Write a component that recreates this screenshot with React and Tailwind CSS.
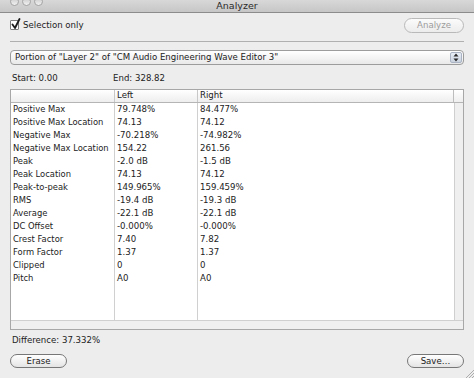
const rows = [
  ['Positive Max', '79.748%', '84.477%'],
  ['Positive Max Location', '74.13', '74.12'],
  ['Negative Max', '-70.218%', '-74.982%'],
  ['Negative Max Location', '154.22', '261.56'],
  ['Peak', '-2.0 dB', '-1.5 dB'],
  ['Peak Location', '74.13', '74.12'],
  ['Peak-to-peak', '149.965%', '159.459%'],
  ['RMS', '-19.4 dB', '-19.3 dB'],
  ['Average', '-22.1 dB', '-22.1 dB'],
  ['DC Offset', '-0.000%', '-0.000%'],
  ['Crest Factor', '7.40', '7.82'],
  ['Form Factor', '1.37', '1.37'],
  ['Clipped', '0', '0'],
  ['Pitch', 'A0', 'A0'],
];

const Light = () => (
  <div className="w-[9px] h-[9px] rounded-full border border-[#a4a4a4] bg-gradient-to-b from-[#c9c9c9] to-[#f2f2f2]" />
);

const Column = ({ index, className }) => (
  <div className={`flex flex-col ${className}`}>
    {rows.map((r) => (
      <div key={r[0]} className="h-[13px] leading-[13px] whitespace-nowrap">
        {r[index]}
      </div>
    ))}
  </div>
);

export default function App() {
  return (
    <div
      className="w-[474px] h-[378px] bg-[#ededed] flex flex-col overflow-hidden relative text-[8.6px] text-[#222]"
      style={{ fontFamily: '"DejaVu Sans", sans-serif' }}
    >
      {/* title bar */}
      <div className="h-[13px] relative flex items-start bg-gradient-to-b from-[#d8d8d8] to-[#c6c6c6] border-b border-[#8c8c8c]">
        <div className="flex gap-[3px] pl-[10px] -mt-[3px]">
          <Light />
          <Light />
          <Light />
        </div>
        <div className="absolute inset-x-0 top-0 text-center text-[9.5px] leading-[12px] text-[#2a2a2a]">Analyzer</div>
      </div>

      <div className="flex flex-col px-[10px]">
        {/* selection row */}
        <div className="mt-[5px] h-[15px] flex items-center justify-between">
          <div className="flex items-center gap-[4px]">
            <div className="relative w-[9px] h-[10px] border border-[#7d7d7d] bg-white rounded-[1px]">
              <svg className="absolute -top-[3px] left-0" width="10" height="12" viewBox="0 0 10 12">
                <path d="M1.5 6.5 L4 10 L8.5 1" fill="none" stroke="#1a1a1a" strokeWidth="1.8" strokeLinecap="round" strokeLinejoin="round" />
              </svg>
            </div>
            <span>Selection only</span>
          </div>
          <div className="w-[60px] h-[15px] rounded-full border border-[#b9b9b9] bg-gradient-to-b from-[#fbfbfb] to-[#ececec] flex items-center justify-center text-[#9c9c9c]">
            Analyze
          </div>
        </div>

        {/* separator */}
        <div className="mt-[8px] h-[1px] bg-[#b0b0b0]" />

        {/* dropdown */}
        <div className="mt-[8px] h-[15px] rounded-[4px] border border-[#9c9c9c] bg-gradient-to-b from-white to-[#e9e9e9] flex items-center justify-between pl-[4px] pr-[1px]">
          <span>Portion of "Layer 2" of "CM Audio Engineering Wave Editor 3"</span>
          <div className="w-[12px] h-[11px] rounded-[2px] border border-[#a9b3c3] bg-gradient-to-b from-[#e9eef6] to-[#c9d2de] flex items-center justify-center">
            <svg width="6" height="9" viewBox="0 0 6 9">
              <path d="M3 0.5 L5.5 3.5 H0.5 Z M3 8.5 L5.5 5.5 H0.5 Z" fill="#2b2b2b" />
            </svg>
          </div>
        </div>

        {/* start / end */}
        <div className="mt-[7px] h-[12px] leading-[12px] flex pl-[2px]">
          <span className="w-[101px]">Start: 0.00</span>
          <span>End: 328.82</span>
        </div>

        {/* table */}
        <div className="mt-[5px] h-[241px] border border-[#a7a7a7] flex flex-col bg-[#f0f0f0]">
          <div className="h-[13px] flex border-b border-[#b5b5b5] bg-gradient-to-b from-white to-[#eeeeee] leading-[11px]">
            <div className="w-[104px] border-r border-[#c8c8c8]" />
            <div className="w-[83px] border-r border-[#c8c8c8] pl-[2px]">Left</div>
            <div className="flex-1 pl-[2px] border-r border-[#bdbdbd]">Right</div>
            <div className="w-[9px]" />
          </div>
          <div className="flex-1 flex">
            <div className="flex-1 flex bg-white">
              <Column index={0} className="w-[104px] border-r border-[#d0d0d0] pl-[2px] text-[8.4px]" />
              <Column index={1} className="w-[83px] border-r border-[#d0d0d0] pl-[2px]" />
              <Column index={2} className="flex-1 pl-[2px]" />
            </div>
            <div className="w-[9px] border-l border-[#cfcfcf] bg-[#efefef]" />
          </div>
          <div className="h-[9px] border-t border-[#cfcfcf] bg-[#efefef]" />
        </div>

        {/* difference */}
        <div className="mt-[4px] h-[12px] leading-[12px] pl-[2px]">Difference: 37.332%</div>

        {/* buttons */}
        <div className="mt-[8px] h-[14px] flex justify-between">
          <div className="w-[57px] h-[14px] rounded-full border border-[#777] bg-gradient-to-b from-white to-[#e4e4e4] flex items-center justify-center">
            Erase
          </div>
          <div className="w-[57px] h-[14px] rounded-full border border-[#777] bg-gradient-to-b from-white to-[#e4e4e4] flex items-center justify-center">
            Save…
          </div>
        </div>
      </div>

      {/* resize grip */}
      <svg className="absolute right-0 bottom-0" width="10" height="10" viewBox="0 0 10 10">
        <path d="M2 10 L10 2 M5 10 L10 5 M8 10 L10 8" stroke="#9a9a9a" strokeWidth="0.8" />
      </svg>
    </div>
  );
}
